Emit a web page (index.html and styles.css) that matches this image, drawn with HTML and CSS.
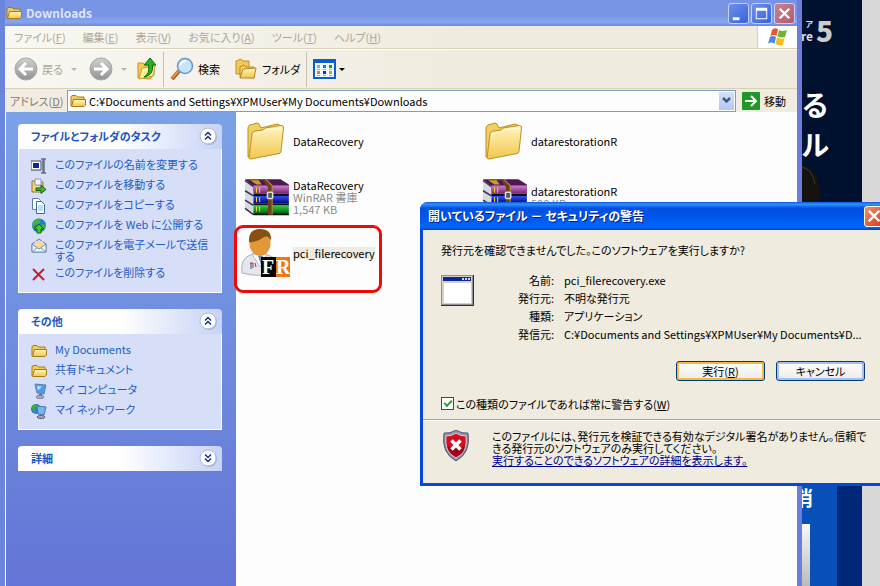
FILE: index.html
```html
<!DOCTYPE html>
<html lang="ja">
<head>
  <meta charset="utf-8">
  <title>Downloads</title>
  <link rel="stylesheet" href="styles.css">
</head>
<body>

  <!-- shared icons -->
  <svg class="defs" width="0" height="0" aria-hidden="true">
    <defs>
      <linearGradient id="gFolder" x1="0" y1="0" x2="0" y2="1">
        <stop offset="0" stop-color="#fff6c0"/><stop offset="1" stop-color="#f2c64c"/>
      </linearGradient>
      <linearGradient id="gBall" x1="0" y1="0" x2="0" y2="1">
        <stop offset="0" stop-color="#d0d0d0"/><stop offset="1" stop-color="#929292"/>
      </linearGradient>
      <linearGradient id="gPurple" x1="0" y1="0" x2="0" y2="1">
        <stop offset="0" stop-color="#d080d0"/><stop offset="1" stop-color="#702070"/>
      </linearGradient>
      <linearGradient id="gBlue" x1="0" y1="0" x2="0" y2="1">
        <stop offset="0" stop-color="#3050f0"/><stop offset="1" stop-color="#000880"/>
      </linearGradient>
      <linearGradient id="gGreen" x1="0" y1="0" x2="0" y2="1">
        <stop offset="0" stop-color="#30d040"/><stop offset="1" stop-color="#006010"/>
      </linearGradient>
      <symbol id="folder" viewBox="0 0 16 16">
        <path d="M1 13V4l1-1.500h4L7.500 4H14v3" fill="#f0cc60" stroke="#a87c10"/>
        <path d="M1.500 13.500L3.500 6.500H15.500V12L14 13.500z" fill="url(#gFolder)" stroke="#a87c10"/>
      </symbol>
      <symbol id="folder-big" viewBox="3 0 48 48">
        <path d="M7 40L7 11Q7 9 9 8L16 6Q18 6 19 9L20 11L36 7Q39 7 39 10V36z" fill="#f2ce64" stroke="#b8901c"/>
        <path d="M8 41L11 17Q11 15 14 14L22 13L24 11L40 8.500Q43 8.500 42.500 11L40 34Q40 36 38 36.500L10 42Q8 42 8 41z" fill="url(#gFolder)" stroke="#c09020"/>
        <path d="M12 17.500L23 15l3-2L41 11" fill="none" stroke="#fffbe0"/>
      </symbol>
      <symbol id="rar" viewBox="0 0 46 40">
        <path d="M1 3L35 3L43 8V14H9z" fill="#501850"/>
        <path d="M1 3L9 10V37L1 31z" fill="#d8d8e4"/>
        <path d="M1 4l8 6M1 14l8 5M1 23l8 5M1 31l8 6" stroke="#383848" stroke-width="1.500"/>
        <path d="M9 9H43V17H9z" fill="url(#gPurple)"/>
        <path d="M9 19H43V26H9z" fill="url(#gBlue)"/>
        <path d="M9 28H43V36H9z" fill="url(#gGreen)"/>
        <path d="M9 18H43M9 27H43M9 36.500H43" stroke="#101018" stroke-width="2"/>
        <path d="M12 11v5M15 11v5M12 20v5M15 20v5M12 29v5M15 29v5" stroke="#f0d020"/>
        <path d="M6 4h8l3 4h-5z" fill="#c8a020"/>
        <path d="M20 3L27 9V37h-4V11l-5-8z" fill="#6c4218"/>
        <path d="M21 3l6 6v28" stroke="#b88848" fill="none"/>
        <rect x="22.500" y="15.500" width="5" height="6" rx="1" fill="#555" stroke="#ddd" stroke-width="1.500"/>
      </symbol>
      <symbol id="up2" viewBox="0 0 20 20">
        <circle cx="11" cy="11" r="8" fill="#8090c8" opacity=".5"/>
        <circle cx="10" cy="10" r="8" fill="#fff" stroke="#b0b8e0"/>
        <path d="M7 9.500l3-3 3 3M7 13.500l3-3 3 3" fill="none" stroke="#10308c" stroke-width="1.500"/>
      </symbol>
      <symbol id="down2" viewBox="0 0 20 20">
        <circle cx="11" cy="11" r="8" fill="#8090c8" opacity=".5"/>
        <circle cx="10" cy="10" r="8" fill="#fff" stroke="#b0b8e0"/>
        <path d="M7 6.500l3 3 3-3M7 10.500l3 3 3-3" fill="none" stroke="#10308c" stroke-width="1.500"/>
      </symbol>
      <symbol id="monitor" viewBox="0 0 16 16">
        <path d="M4 1L15 2L13 11L6 10z" fill="#4a9cf0" stroke="#6880a8"/>
        <path d="M6 3l5 .5-4 4z" fill="#b8e4ff"/>
        <path d="M8 11h3v2H8z" fill="#707090"/>
        <ellipse cx="9" cy="14" rx="4" ry="1.800" fill="#a8a8cc" stroke="#606080" stroke-width=".6"/>
      </symbol>
    </defs>
  </svg>

  <div class="desktop">
    <main class="window">
      <header class="titlebar">
        <svg class="icon16"><use href="#folder"/></svg>
        <h1>Downloads</h1>
        <div class="win-buttons">
          <button type="button" aria-label="最小化"><svg viewBox="0 0 20 20"><path d="M4 14h7v3H4z" fill="#fff"/></svg></button>
          <button type="button" aria-label="最大化"><svg viewBox="0 0 20 20"><path d="M4 4h12v12H4zM5 7v8h10V7z" fill="#fff" fill-rule="evenodd"/></svg></button>
          <button type="button" class="close" aria-label="閉じる"><svg viewBox="0 0 20 20"><path d="M5 5l10 10M15 5L5 15" stroke="#fff" stroke-width="2.500"/></svg></button>
        </div>
      </header>

      <nav class="menubar">
        <button type="button">ファイル(<u>F</u>)</button>
        <button type="button">編集(<u>E</u>)</button>
        <button type="button">表示(<u>V</u>)</button>
        <button type="button">お気に入り(<u>A</u>)</button>
        <button type="button">ツール(<u>T</u>)</button>
        <button type="button">ヘルプ(<u>H</u>)</button>
        <span class="flag">
          <svg width="22" height="20" viewBox="0 0 22 20">
            <path d="M5 3Q8 0 11 2.500L9.500 9Q7 7 3.500 9z" fill="#e8582c"/>
            <path d="M12 3Q15 5 20 3L18 10Q14 11 10.500 9.500z" fill="#6cb43c"/>
            <path d="M3 10Q6 8 9 10L7.500 17Q5 14.500 1 16.500z" fill="#4c88e0"/>
            <path d="M10 10.500Q14 12.500 17.500 11L16 18Q12 19 8.500 17z" fill="#f0c020"/>
          </svg>
        </span>
      </nav>

      <div class="toolbar">
        <button type="button" class="tool back" disabled>
          <svg width="24" height="24" viewBox="0 0 24 24"><circle cx="12" cy="12" r="11" fill="url(#gBall)" stroke="#a8a8a8"/><path d="M19 12H7M12 6l-6 6 6 6" fill="none" stroke="#fff" stroke-width="3"/></svg>
          <span>戻る</span><i class="caret"></i>
        </button>
        <button type="button" class="tool forward" aria-label="進む" disabled>
          <svg width="24" height="24" viewBox="0 0 24 24"><circle cx="12" cy="12" r="11" fill="url(#gBall)" stroke="#a8a8a8"/><path d="M5 12h12M12 6l6 6-6 6" fill="none" stroke="#fff" stroke-width="3"/></svg>
          <i class="caret"></i>
        </button>
        <button type="button" class="tool" aria-label="上へ">
          <svg width="20" height="24" viewBox="0 0 20 24"><path d="M1 21V6h5l2 2h9v10l-4 4z" fill="#f4cc54" stroke="#c09428"/><path d="M2 22l3-11 13-2-2 10z" fill="#fff0a0" stroke="#c89c30"/><path d="M7 20Q13 17 11.500 8H7L13 1l6 7h-3.500Q17 18 7 20z" fill="#2cac28" stroke="#107010"/></svg>
        </button>
        <span class="sep"></span>
        <button type="button" class="tool search">
          <svg width="24" height="24" viewBox="0 0 24 24"><path d="M9 14L2 22" stroke="#a05820" stroke-width="4"/><path d="M9 13.500L2 21" stroke="#f09040" stroke-width="2"/><circle cx="15" cy="9" r="7.500" fill="#c4e6fc" stroke="#7090d0" stroke-width="1.500"/><path d="M10 8q2-4 6-4" stroke="#fff" stroke-width="2" fill="none"/></svg>
          <span>検索</span>
        </button>
        <button type="button" class="tool folders">
          <svg width="24" height="24" viewBox="0 0 24 24"><path d="M2 17V4l5-2 2 2h6v13z" fill="#f0c858" stroke="#c89028"/><path d="M6 20V10l4-2 2 2h8v11z" fill="#f8d470" stroke="#b88420"/><path d="M6 21l3-9 13-1-2 10z" fill="url(#gFolder)" stroke="#b88420"/></svg>
          <span>フォルダ</span>
        </button>
        <span class="sep"></span>
        <button type="button" class="tool views" aria-label="表示">
          <svg width="24" height="20" viewBox="0 0 24 20"><rect x="1" y="1" width="21" height="18" fill="#f4f8ff" stroke="#0860d0" stroke-width="2"/><path d="M0 0h23v4H0z" fill="#0860d0"/><path d="M4 6h3v3H4z" fill="#98a0d8"/><path d="M10 6h3v3h-3z" fill="#0878e8"/><path d="M16 6h3v3h-3z" fill="#10a010"/><path d="M4 12h3v3H4z" fill="#f07040"/><path d="M10 12h3v3h-3z" fill="#1030a0"/><path d="M16 12h3v3h-3z" fill="#d8a008"/><path d="M4 10.500h3M10 10.500h3M16 10.500h3M4 16.500h3M10 16.500h3M16 16.500h3" stroke="#aaa"/></svg>
          <i class="caret dark"></i>
        </button>
      </div>

      <form class="addressbar">
        <label for="address">アドレス(<u>D</u>)</label>
        <div class="combo">
          <svg class="icon16"><use href="#folder"/></svg>
          <input id="address" type="text" value="C:¥Documents and Settings¥XPMUser¥My Documents¥Downloads">
          <button type="button" class="drop" aria-label="一覧"><svg width="15" height="17" viewBox="0 0 15 17"><path d="M4 6l3.500 3.500L11 6" fill="none" stroke="#46587c" stroke-width="2.500"/></svg></button>
        </div>
        <button type="button" class="go">
          <svg width="18" height="18" viewBox="0 0 18 18"><rect width="18" height="18" rx="1" fill="#209828"/><path d="M3 9h11M9 4l5 5-5 5" fill="none" stroke="#fff" stroke-width="2"/></svg>
          <span>移動</span>
        </button>
      </form>

      <div class="content">
        <aside class="sidebar">
          <section class="panel">
            <h2>ファイルとフォルダのタスク <svg><use href="#up2"/></svg></h2>
            <ul>
              <li><svg class="icon16" viewBox="0 0 16 16"><path d="M0 3h10v9H0z" fill="#fff" stroke="#445"/><path d="M2 5h6v5H2z" fill="#0828a0"/><path d="M10 1h2v14h-2M15 1h-2v14h2" fill="none" stroke="#667088" stroke-width="1.500"/></svg><a href="#">このファイルの名前を変更する</a></li>
              <li><svg class="icon16" viewBox="0 0 16 16"><path d="M1 14V3h4l1 1h6v10z" fill="#f4d470" stroke="#987828"/><path d="M4 1h6v6H4z" fill="#eef4ff" stroke="#8898b8"/><path d="M5 10h5V7l5 4.500-5 4v-3H5z" fill="#40b820" stroke="#106010"/></svg><a href="#">このファイルを移動する</a></li>
              <li><svg class="icon16" viewBox="0 0 16 16"><path d="M1.500.500h6l2 2v9h-8z" fill="#fff" stroke="#5880a8"/><path d="M5.500 3.500h5l3 3v9h-8z" fill="#fff" stroke="#386898"/><path d="M7 8h5M7 10h5M7 12h5" stroke="#80b8e8"/></svg><a href="#">このファイルをコピーする</a></li>
              <li><svg class="icon16" viewBox="0 0 16 16"><circle cx="8" cy="7.500" r="7" fill="#2878d8"/><path d="M3 3q4-3 7-1l-2 4-4 1-2 3Q0 6 3 3zM11 6l4 1-2 5-3-2z" fill="#38b840"/><path d="M8 6l5 5h-3v4H6v-4H3z" fill="#48c828" stroke="#106810"/></svg><a href="#">このファイルを Web に公開する</a></li>
              <li><svg class="icon16" viewBox="0 0 16 16"><path d="M1 6l7-5 7 5v8H1z" fill="#c8dcf4" stroke="#687898"/><path d="M4 3h8v6H4z" fill="#f8d898"/><path d="M1 6l7 5 7-5v8H1z" fill="#e8f4ff" stroke="#7890b0"/><path d="M1 14l5-4M15 14l-5-4" stroke="#7890b0"/></svg><a href="#">このファイルを電子メールで送信する</a></li>
              <li><svg class="icon16" viewBox="0 0 16 16"><path d="M2 3l11 11M13 3L2 14" stroke="#d01830" stroke-width="2"/></svg><a href="#">このファイルを削除する</a></li>
            </ul>
          </section>

          <section class="panel">
            <h2>その他 <svg><use href="#up2"/></svg></h2>
            <ul>
              <li><svg class="icon16"><use href="#folder"/></svg><a href="#">My Documents</a></li>
              <li><svg class="icon16"><use href="#folder"/></svg><a href="#">共有ドキュメント</a></li>
              <li><svg class="icon16"><use href="#monitor"/></svg><a href="#">マイ コンピュータ</a></li>
              <li><svg class="icon16" viewBox="0 0 16 16"><circle cx="5" cy="6" r="5" fill="#2878d8"/><path d="M1 3q4-3 6 0L4 6l1 4Q1 9 1 3z" fill="#38b030"/><path d="M6 3l9 1-2 8-6-1z" fill="#70b8f8" stroke="#5870a0"/><ellipse cx="10" cy="14" rx="4" ry="1.500" fill="#a8a8cc" stroke="#606080"/></svg><a href="#">マイ ネットワーク</a></li>
            </ul>
          </section>

          <section class="panel">
            <h2>詳細 <svg><use href="#down2"/></svg></h2>
          </section>
        </aside>

        <ul class="files">
          <li><svg class="icon48"><use href="#folder-big"/></svg><div>DataRecovery</div></li>
          <li><svg class="icon48"><use href="#folder-big"/></svg><div>datarestorationR</div></li>
          <li><svg class="icon48"><use href="#rar"/></svg><div>DataRecovery<small>WinRAR 書庫</small><small>1,547 KB</small></div></li>
          <li><svg class="icon48"><use href="#rar"/></svg><div>datarestorationR<small>500 KB</small></div></li>
          <li class="selected">
            <svg class="icon48" viewBox="0 0 48 48">
              <path d="M-2 44Q-4 30 6 26l10-3 10 4q6 2 6 8v8q-16 6-34 1z" fill="#e4e8ec" stroke="#a8b0b8"/>
              <path d="M8 25l8 13 7-13z" fill="#fff" stroke="#b0b8c0"/>
              <path d="M14 27h5l-2 9z" fill="#7088a0"/>
              <ellipse cx="16" cy="14" rx="10.500" ry="13" fill="#e09838"/>
              <path d="M5 13Q4 0 16 0T27 12Q25 6 20 8Q12 14 5 13z" fill="#885010"/>
              <path d="M6 34h3v5M11 34l1 4" stroke="#d02030" fill="none"/><path d="M7 34v6" stroke="#2050c0"/>
              <rect x="17" y="28" width="15" height="20" fill="#080808"/><rect x="32" y="28" width="14" height="20" fill="#f07818"/>
              <text x="18" y="45" class="badge">F</text><text x="32" y="45" class="badge">R</text>
            </svg>
            <div><mark>pci_filerecovery</mark></div>
          </li>
        </ul>
      </div>
    </main>

    <!-- the browser page peeking out behind -->
    <div class="behind">
      <div class="hero">
        <p class="product"><span><small>ア</small>re</span><b>5</b></p>
        <p class="copy">る</p>
        <p class="copy cut"><span>ル</span></p>
        <svg width="18" height="54" viewBox="0 0 18 54"><path d="M0 0Q17 4 18 30v24H0z" fill="#15130f"/><path d="M0 3q11 3 13 17" stroke="#383836" fill="none"/></svg>
      </div>
      <div class="promo">
        <p class="copy small cut"><span>消</span></p>
        <div class="box"></div>
      </div>
    </div>

    <section class="dialog" role="dialog" aria-labelledby="dlg-title">
      <header>
        <h2 id="dlg-title">開いているファイル － セキュリティの警告</h2>
        <button type="button" class="close" aria-label="閉じる"><svg viewBox="0 0 20 20"><path d="M4 4l11 11M15 4L4 15" stroke="#fff" stroke-width="2.500"/></svg></button>
      </header>
      <div class="dialog-body">
        <p class="question">発行元を確認できませんでした。このソフトウェアを実行しますか?</p>
        <div class="info">
          <svg width="33" height="31" viewBox="0 0 33 31"><path d="M0 0h33v31H0z" fill="#303030"/><path d="M0 0h32v30H0z" fill="#909090"/><path d="M1 1h30v28H1z" fill="#d4d0c8"/><path d="M2 2h28v4H2z" fill="#0828a0"/><path d="M21 3h2v2h-2zM24 3h2v2h-2zM27 3h2v2h-2z" fill="#ddd"/><path d="M3 8h27v20H3z" fill="#fff"/></svg>
          <dl>
            <dt>名前:</dt><dd>pci_filerecovery.exe</dd>
            <dt>発行元:</dt><dd>不明な発行元</dd>
            <dt>種類:</dt><dd>アプリケーション</dd>
            <dt>発信元:</dt><dd>C:¥Documents and Settings¥XPMUser¥My Documents¥D...</dd>
          </dl>
        </div>
        <div class="actions">
          <button type="button" class="default">実行(<u>R</u>)</button>
          <button type="button">キャンセル</button>
        </div>
        <div class="always">
          <input id="always" type="checkbox" checked>
          <label for="always">この種類のファイルであれば常に警告する(<u>W</u>)</label>
        </div>
      </div>
      <footer>
        <svg width="26" height="32" viewBox="0 0 26 32"><path d="M1 3Q7 4 13 0q6 4 12 3 3 20-12 28Q-2 23 1 3z" fill="#8c94a8" stroke="#505870"/><path d="M3 6q6 0 10-3 4 3 10 3 2 16-10 22Q1 22 3 6z" fill="#d01020" stroke="#f0c8cc"/><path d="M4 16q8 4 18 0-1 8-9 11-7-3-9-11z" fill="#980818"/><path d="M8.500 10.500l9 9M17.500 10.500l-9 9" stroke="#fff" stroke-width="3.500"/></svg>
        <p>このファイルには、発行元を検証できる有効なデジタル署名がありません。信頼できる発行元のソフトウェアのみ実行してください。<br><a href="#">実行することのできるソフトウェアの詳細を表示します。</a></p>
      </footer>
    </section>
  </div>

</body>
</html>
```

FILE: styles.css
```css
*, ::before, ::after {
  box-sizing: border-box;
}
body {
  margin: 0;
  overflow: hidden;
  font-family: "Noto Sans CJK JP", sans-serif;
  font-size: 11px;
  line-height: 12px;
  font-feature-settings: "palt";
  color: #000;
}
h1, h2, p, ul, dl, dd {
  margin: 0;
  padding: 0;
}
ul {
  list-style: none;
}
button, input {
  font: inherit;
  font-feature-settings: inherit;
  color: inherit;
  padding: 0;
  margin: 0;
  border: none;
  background: none;
}
button, label {
  white-space: nowrap;
}
svg {
  flex: none;
}
.defs {
  position: absolute;
}
.icon16 {
  width: 16px;
  height: 16px;
}
.icon48 {
  width: 48px;
  height: 48px;
  overflow: visible;
}
.desktop {
  position: relative;
  display: grid;
  grid-template-columns: 1fr 78px;
  min-height: 100vh;
  overflow: hidden;
}

/* explorer window */
.window {
  display: flex;
  flex-direction: column;
  border-left: 5px solid #6b84dc;
  border-right: 5px solid #6b7edc;
  box-shadow: inset 1px 0 #fdfdfd;
}
.titlebar {
  display: flex;
  align-items: center;
  gap: 4px;
  height: 26px;
  padding-left: 1px;
  background: linear-gradient(#7693e4, #7a94e4 60%, #86a6f0 85%, #6d86dc);
}
.titlebar h1 {
  flex: 1;
  font-size: 12px;
  line-height: 16px;
  color: #dce6fc;
}
.win-buttons {
  display: flex;
  gap: 2px;
  padding-right: 2px;
}
.win-buttons button, .dialog .close {
  width: 21px;
  height: 21px;
  border: 1px solid #c4d0f8;
  border-radius: 3px;
  background: linear-gradient(135deg, #7090ec, #3464dc);
}
.win-buttons svg, .dialog .close svg {
  display: block;
  width: 19px;
  height: 19px;
}
.win-buttons .close {
  background: linear-gradient(135deg, #c88494, #b05c70);
}
.menubar {
  display: flex;
  align-items: center;
  gap: 17px;
  height: 23px;
  padding-left: 9px;
  border-bottom: 1px solid #d8d2b8;
  background: linear-gradient(90deg, #f8f7f2, #efebde 60%);
  color: #aca899;
}
.flag {
  display: flex;
  align-items: center;
  justify-content: center;
  width: 40px;
  height: 22px;
  margin-left: auto;
  border-left: 1px solid #d8d2b8;
  background: #fff;
}
.toolbar {
  display: flex;
  align-items: center;
  height: 40px;
  padding-left: 9px;
  border-top: 1px solid #fff;
  border-bottom: 1px solid #d8d2b8;
  background: linear-gradient(90deg, #f8f7f2, #efebde 60%);
}
.tool {
  display: flex;
  align-items: center;
  gap: 4px;
}
.tool:disabled {
  color: #aca899;
}
.back {
  width: 75px;
}
.forward {
  width: 48px;
}
.caret {
  margin-left: 4px;
  border: 3px solid transparent;
  border-top-color: #b8b4a8;
  border-bottom: none;
}
.caret.dark {
  margin-left: -2px;
  border-top-color: #000;
}
.sep {
  width: 1px;
  height: 35px;
  margin: 0 6px;
  background: #c8c0b4;
}
.search {
  width: 64px;
}
.folders {
  width: 66px;
}
.addressbar {
  display: flex;
  align-items: center;
  height: 23px;
  padding-left: 5px;
  background: #f0ece0;
}
.addressbar label {
  width: 57px;
  color: #808078;
}
.combo {
  display: flex;
  flex: 1;
  align-items: center;
  gap: 3px;
  height: 22px;
  padding: 0 1px 0 2px;
  border: 1px solid #7f9db9;
  background: #fdfdfd;
}
.combo input {
  flex: 1;
  min-width: 0;
  height: 18px;
  line-height: 18px;
  outline: none;
}
.drop {
  width: 15px;
  height: 18px;
  background: linear-gradient(#d4e0fc, #b0c8f4);
}
.go {
  display: flex;
  align-items: center;
  gap: 4px;
  width: 61px;
  padding-left: 6px;
}
.content {
  display: flex;
  flex: 1;
  padding-left: 1px;
}

/* task pane */
.sidebar {
  display: flex;
  flex-direction: column;
  gap: 16px;
  width: 230px;
  padding: 12px 14px 12px 12px;
  background: linear-gradient(#7ba2e7, #6375d6);
}
.panel h2 {
  display: flex;
  align-items: center;
  justify-content: space-between;
  height: 25px;
  padding: 0 4px 2px 13px;
  border-radius: 4px 4px 0 0;
  background: linear-gradient(90deg, #fff 50%, #c6d3f7);
  font-size: 11px;
  color: #1c56c0;
}
.panel h2 svg {
  width: 20px;
  height: 20px;
}
.panel ul {
  padding: 5px 12px 10px;
  border: 1px solid #fff;
  border-top: none;
  background: #d6dff7;
}
.panel li {
  display: flex;
  gap: 8px;
  min-height: 20px;
}
.panel li svg {
  margin-top: 4px;
}
.panel li a {
  padding-top: 4px;
  color: #215dc6;
  text-decoration: none;
}

/* file list */
.files {
  display: grid;
  flex: 1;
  grid-template-columns: 238px 238px;
  grid-auto-rows: 48px;
  align-content: start;
  gap: 8px 0;
  padding: 5px 0 0 8px;
  background: #fdfdfd;
}
.files li {
  position: relative;
  display: flex;
  align-items: center;
  gap: 1px;
}
.files small {
  display: block;
  font-size: 11px;
  color: #8c8c8c;
}
.files mark {
  display: inline-block;
  background: #efebde;
  color: #000;
}
.selected::after {
  content: "";
  position: absolute;
  left: -10px;
  top: -4px;
  width: 148px;
  height: 68px;
  border: 3px solid #f00808;
  border-radius: 9px;
}
.badge {
  font: bold 20px "Liberation Serif", serif;
  fill: #fff;
}

/* page behind the window */
.behind {
  display: flex;
  flex-direction: column;
  border-right: 18px solid #d8d8d8;
  background: #00102f;
  color: #fff;
}
.hero {
  height: 486px;
  overflow: hidden;
}
.product {
  display: flex;
  align-items: flex-end;
  gap: 3px;
  height: 44px;
  font-weight: bold;
}
.product span {
  width: 11px;
  font-size: 12px;
  line-height: 16px;
  direction: rtl;
  color: #ddd;
}
.product small {
  display: block;
  font-size: 8px;
  line-height: 8px;
}
.product b {
  font-size: 28px;
  line-height: 28px;
  color: #ccc;
}
.copy {
  padding-top: 40px;
  font-size: 28px;
  line-height: 40px;
  font-weight: bold;
}
.copy.cut {
  display: flex;
  justify-content: flex-end;
  width: 27px;
  padding-top: 0;
  overflow: hidden;
}
.promo {
  flex: 1;
  border-right: 25px solid #002878;
  background: #0850b8;
}
.copy.small {
  width: 11px;
  font-size: 20px;
  line-height: 24px;
}
.box {
  width: 8px;
  height: 62px;
  margin-top: 14px;
  background: linear-gradient(#f8f8f8, #bbb);
}

/* security warning */
.dialog {
  position: absolute;
  left: 420px;
  right: -9px;
  top: 202px;
  border: 3px solid #0848d8;
  border-top: none;
  border-radius: 8px 8px 0 0;
  background: #efebde;
}
.dialog header {
  display: flex;
  align-items: center;
  justify-content: space-between;
  height: 28px;
  margin: 0 -3px;
  padding: 0 4px 0 8px;
  border-radius: 8px 8px 0 0;
  background: linear-gradient(#0a58e0, #3490ff 8%, #0050e0 22%, #0058ec 60%, #0068ff 90%, #0040c8);
}
.dialog h2 {
  font-size: 12px;
  line-height: 16px;
  white-space: nowrap;
  color: #fff;
  text-shadow: 1px 1px #0a1c70;
}
.dialog .close {
  border-color: #fff;
  background: linear-gradient(135deg, #f09070, #d03c10);
}
.dialog-body {
  padding: 14px 21px 9px 18px;
}
.question {
  white-space: nowrap;
}
.info {
  display: flex;
  align-items: flex-start;
  gap: 40px;
  padding-top: 15px;
}
.info svg {
  margin-top: 4px;
}
dl {
  display: grid;
  grid-template-columns: 40px 1fr;
  column-gap: 10px;
  line-height: 18px;
  white-space: nowrap;
}
dt {
  text-align: right;
}
.actions {
  display: flex;
  justify-content: flex-end;
  gap: 11px;
  padding-top: 18px;
}
.actions button {
  width: 89px;
  height: 20px;
  border: 1px solid #003c74;
  border-radius: 3px;
  background: linear-gradient(#fff, #ecebe6);
  box-shadow: inset 0 0 0 2px #a8c0f0;
}
.actions .default {
  box-shadow: inset 0 0 0 2px #f8b848;
}
.always {
  display: flex;
  align-items: center;
  gap: 2px;
  padding-top: 16px;
}
.always input {
  appearance: none;
  width: 13px;
  height: 13px;
  border: 1px solid #1c5180;
  background: #fff;
}
.always input:checked::before {
  content: "";
  display: block;
  width: 8px;
  height: 5px;
  margin: 2px 0 0 2px;
  border: solid #21a121;
  border-width: 0 0 2px 2px;
  transform: rotate(-45deg);
}
.dialog footer {
  display: flex;
  gap: 23px;
  height: 64px;
  padding: 10px 16px 0 20px;
  border-top: 1px solid #aca899;
  box-shadow: inset 0 1px #fff;
}
.dialog footer a {
  color: #000090;
}
```
